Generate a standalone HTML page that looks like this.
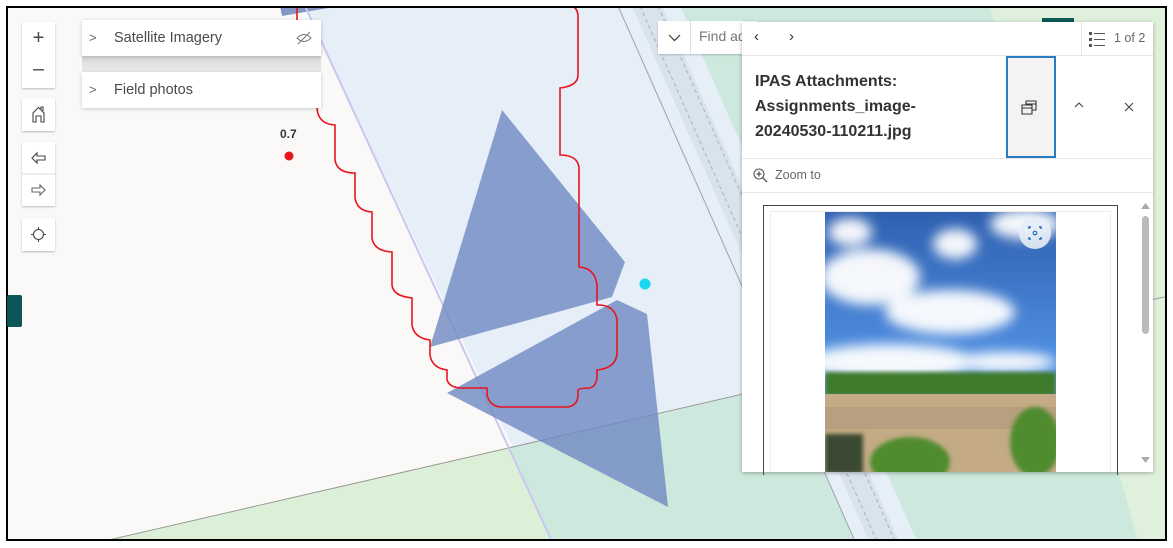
<!DOCTYPE html>
<html><head><meta charset="utf-8"><style>
body{margin:0;width:1173px;height:548px;background:#fff;overflow:hidden;font-family:"Liberation Sans",Arial,sans-serif;position:relative}
.abs{position:absolute}
.btn{position:absolute;left:22px;width:33px;background:#fff;box-shadow:0 1px 2px rgba(0,0,0,.25);color:#444;text-align:center}
.lay{position:absolute;left:82px;width:239px;height:36px;background:#fff;box-shadow:0 1px 4px rgba(0,0,0,.2);font-size:14.5px;color:#4a4a4a;line-height:36px}
</style></head><body>
<svg class="abs" style="left:0;top:0" width="1173" height="548">
<defs><clipPath id="c"><rect x="7" y="7" width="1159" height="533"/></clipPath></defs>
<g clip-path="url(#c)">
<rect x="0" y="0" width="1173" height="548" fill="#faf9f8"/>
<polygon points="305,6 1173,6 1173,548 560,548" fill="#e6eef8"/>
<polygon points="0,565 1173,295 1173,548 0,548" fill="#dcf0d8"/>
<polygon points="508,448 1173,295 1173,548 555,548" fill="#cde8dc"/>
<polygon points="680,6 1173,6 1173,548 920,548" fill="#cde8dc"/>
<polygon points="990,6 1173,6 1173,548 1140,548" fill="#dff1dc"/>
<polygon points="618,6 680,6 920,548 858,548" fill="#e6eef8"/>
<polygon points="632,6 662,6 902,548 872,548" fill="#d9e3ed"/>
<line x1="618" y1="6" x2="858" y2="548" stroke="#9aa4ae" stroke-width="1"/>
<line x1="640" y1="6" x2="880" y2="548" stroke="#a9b3bd" stroke-width="1" stroke-dasharray="4 3"/>
<line x1="658" y1="6" x2="898" y2="548" stroke="#a9b3bd" stroke-width="1" stroke-dasharray="4 3"/>
<line x1="0" y1="565" x2="1173" y2="295" stroke="#9a9a9a" stroke-width="1"/>
<polygon points="280,6 340,6 282,16" fill="#8597c4"/>
<line x1="305" y1="6" x2="555" y2="548" stroke="#c9c6f2" stroke-width="2"/>
<polygon points="502,110 625,262 612,297 430,347" fill="#6f88c2" fill-opacity=".8"/>
<polygon points="617,300 647,314 668,507 447,393" fill="#6f88c2" fill-opacity=".8"/>
<path d="M297,6 V55 Q297,69 315,70 M317,108 Q318,124 335,125 V160 Q337,173 355,173 V198 Q357,211 372,212 V238 Q374,251 392,252 V285 Q393,296 412,298 V325 Q414,338 430,340 V355 Q432,368 447,370 V380 Q450,388 462,388 H487 V395 Q490,406 500,407 H568 Q578,405 578,395 V390 Q579,388 590,388 Q597,386 597,375 V370 Q617,368 617,352 V320 Q615,306 600,305 H597 V285 Q595,268 579,267 V168 Q578,155 560,155 V88 Q578,86 578,75 V15 Q577,7 571,6" fill="none" stroke="#e8141e" stroke-width="1.6"/>
<circle cx="289" cy="156" r="4.5" fill="#e8141e"/>
<circle cx="645" cy="284" r="5.5" fill="#1ad8f2"/>
<text x="280" y="138" font-size="12" font-weight="bold" fill="#333" font-family="Liberation Sans">0.7</text>
<rect x="1042" y="18" width="32" height="6" fill="#0f5a5a"/>
</g>
<rect x="7" y="7" width="1159" height="533" fill="none" stroke="#000" stroke-width="2"/>
<rect x="7" y="295" width="15" height="32" rx="2" fill="#0b5657"/>
</svg>

<div class="btn" style="top:22px;height:66px;font-size:20px;line-height:33px">+<br><span style="position:relative;top:-2px">–</span></div>
<div class="btn" style="top:98px;height:33px"><svg width="33" height="33"><path d="M11 24V15L16.5 9.5 22 15V24H19V18H14V24Z M19 11V9H21V13" fill="none" stroke="#444" stroke-width="1.1"/></svg></div>
<div class="btn" style="top:142px;height:64px"><svg width="33" height="64"><path d="M10 16L15 11V14H23V18H15V21Z" fill="none" stroke="#444" stroke-width="1.1"/><line x1="0" y1="32" x2="33" y2="32" stroke="#ddd"/><path d="M23 48L18 43V46H10V50H18V53Z" fill="none" stroke="#666" stroke-width="1.1"/></svg></div>
<div class="btn" style="top:218px;height:33px"><svg width="33" height="33"><circle cx="16.5" cy="16.5" r="5" fill="none" stroke="#444" stroke-width="1.1"/><path d="M16.5 9V11.5M16.5 21.5V24M9 16.5H11.5M21.5 16.5H24" stroke="#444" stroke-width="1.1"/></svg></div>

<div class="abs" style="left:82px;top:56px;width:239px;height:16px;background:linear-gradient(#d8d8d8,#ececec)"></div>
<div class="lay" style="top:20px"><span style="position:absolute;left:7px;color:#666;font-size:13px">&gt;</span><span style="position:absolute;left:32px">Satellite Imagery</span>
<svg class="abs" style="left:213px;top:10px" width="18" height="16"><path d="M2 8Q9 1 16 8Q9 15 2 8Z" fill="none" stroke="#777" stroke-width="1"/><line x1="3" y1="14" x2="15" y2="2" stroke="#777"/></svg></div>
<div class="lay" style="top:72px"><span style="position:absolute;left:7px;color:#666;font-size:13px">&gt;</span><span style="position:absolute;left:32px">Field photos</span></div>

<div class="abs" style="left:658px;top:21px;width:100px;height:33px;background:#fff;box-shadow:0 1px 2px rgba(0,0,0,.2)">
<svg class="abs" style="left:0;top:0" width="33" height="33"><path d="M11 14L16.5 19.5 22 14" fill="none" stroke="#333" stroke-width="1.2"/><line x1="32.5" y1="0" x2="32.5" y2="33" stroke="#ddd"/></svg>
<span class="abs" style="left:41px;top:7px;font-size:14px;color:#777">Find ad</span></div>

<div class="abs" style="left:742px;top:22px;width:411px;height:450px;background:#fff;box-shadow:0 1px 4px rgba(0,0,0,.3)">
<div class="abs" style="left:0;top:0;width:411px;height:33px;border-bottom:1px solid #e6e6e6"></div>
<span class="abs" style="left:12px;top:6px;font-size:15px;color:#333">&lsaquo;</span>
<span class="abs" style="left:47px;top:6px;font-size:15px;color:#333">&rsaquo;</span>
<div class="abs" style="left:339px;top:0;width:72px;height:33px;border-left:1px solid #e6e6e6"></div>
<svg class="abs" style="left:346px;top:8px" width="20" height="18"><g fill="#555"><rect x="1" y="2" width="3" height="3"/><rect x="1" y="8" width="3" height="3"/><rect x="1" y="14" width="3" height="3"/><rect x="6" y="3" width="11" height="1"/><rect x="6" y="9" width="11" height="1"/><rect x="6" y="15" width="11" height="1"/></g></svg>
<span class="abs" style="left:372px;top:9px;font-size:12.5px;color:#666">1 of 2</span>
<div class="abs" style="left:13px;top:47px;font-size:16px;font-weight:bold;color:#333;line-height:25px">IPAS Attachments:<br>Assignments_image-<br>20240530-110211.jpg</div>
<div class="abs" style="left:264px;top:34px;background:#f3f3f3;border:2px solid #2b7bc0;box-sizing:border-box;width:50px;height:102px"></div>
<svg class="abs" style="left:279px;top:76px" width="18" height="18"><path d="M1 7H11V16H1Z M1 10H11 M5 7V3H15V12H11 M5 6H15" fill="none" stroke="#333" stroke-width="1.1"/></svg>
<svg class="abs" style="left:331px;top:78px" width="12" height="10"><path d="M2 7L6 3 10 7" fill="none" stroke="#444" stroke-width="1.1"/></svg>
<svg class="abs" style="left:381px;top:79px" width="12" height="12"><path d="M2 2L10 10M10 2L2 10" stroke="#444" stroke-width="1.1"/></svg>
<div class="abs" style="left:0;top:136px;width:411px;height:1px;background:#e6e6e6"></div>
<svg class="abs" style="left:10px;top:145px" width="18" height="18"><circle cx="7" cy="7" r="5" fill="none" stroke="#555" stroke-width="1.1"/><path d="M4.5 7H9.5M7 4.5V9.5M10.5 10.5L15 15" stroke="#555" stroke-width="1.3"/></svg>
<span class="abs" style="left:33px;top:146px;font-size:12.5px;color:#666">Zoom to</span>
<div class="abs" style="left:0;top:170px;width:411px;height:1px;background:#e6e6e6"></div>
<div class="abs" style="left:21px;top:183px;width:355px;height:270px;border:1px solid #444;border-bottom:none;box-sizing:border-box"></div>
<div class="abs" style="left:28px;top:189px;width:341px;height:261px;border:1px solid #eee;border-bottom:none;box-sizing:border-box"></div>
<svg class="abs" style="left:83px;top:190px" width="231" height="260">
<defs><linearGradient id="sky" x1="0" y1="0" x2="0" y2="1"><stop offset="0" stop-color="#2f60b0"/><stop offset=".55" stop-color="#4f8ee0"/><stop offset="1" stop-color="#a9c8ea"/></linearGradient>
<filter id="b"><feGaussianBlur stdDeviation="6"/></filter><filter id="b2"><feGaussianBlur stdDeviation="2"/></filter></defs>
<rect width="231" height="260" fill="url(#sky)"/>
<g fill="#fff" filter="url(#b)" opacity=".95"><ellipse cx="45" cy="65" rx="50" ry="28"/><ellipse cx="125" cy="100" rx="65" ry="22"/><ellipse cx="130" cy="32" rx="22" ry="15"/><ellipse cx="65" cy="150" rx="85" ry="18"/><ellipse cx="200" cy="12" rx="35" ry="15"/><ellipse cx="25" cy="20" rx="22" ry="14"/><ellipse cx="180" cy="150" rx="50" ry="10"/></g>
<rect y="160" width="231" height="24" fill="#3d7a2c" filter="url(#b2)"/>
<rect y="182" width="231" height="78" fill="#c4ab85"/>
<rect y="195" width="231" height="22" fill="#a8957a" opacity=".5"/>
<g fill="#4f8c2e" filter="url(#b2)"><ellipse cx="85" cy="250" rx="40" ry="25"/><ellipse cx="210" cy="230" rx="25" ry="35"/><rect x="0" y="222" width="38" height="40" fill="#3a4a30"/></g>
<circle cx="210" cy="21" r="16" fill="#e6edf6" opacity=".9"/>
<path d="M204 17V15H206M214 15H216V17M216 25V27H214M206 27H204V25" fill="none" stroke="#2b6cc0" stroke-width="1.5"/><circle cx="210" cy="21" r="1.8" fill="none" stroke="#2b6cc0" stroke-width="1.2"/>
</svg>
<svg class="abs" style="left:398px;top:178px" width="12" height="270"><path d="M1 9L5.5 3 10 9Z" fill="#aaa"/><rect x="2" y="16" width="7" height="118" rx="3.5" fill="#bbb"/><path d="M1 257L5.5 263 10 257Z" fill="#aaa"/></svg>
</div>
</body></html>
